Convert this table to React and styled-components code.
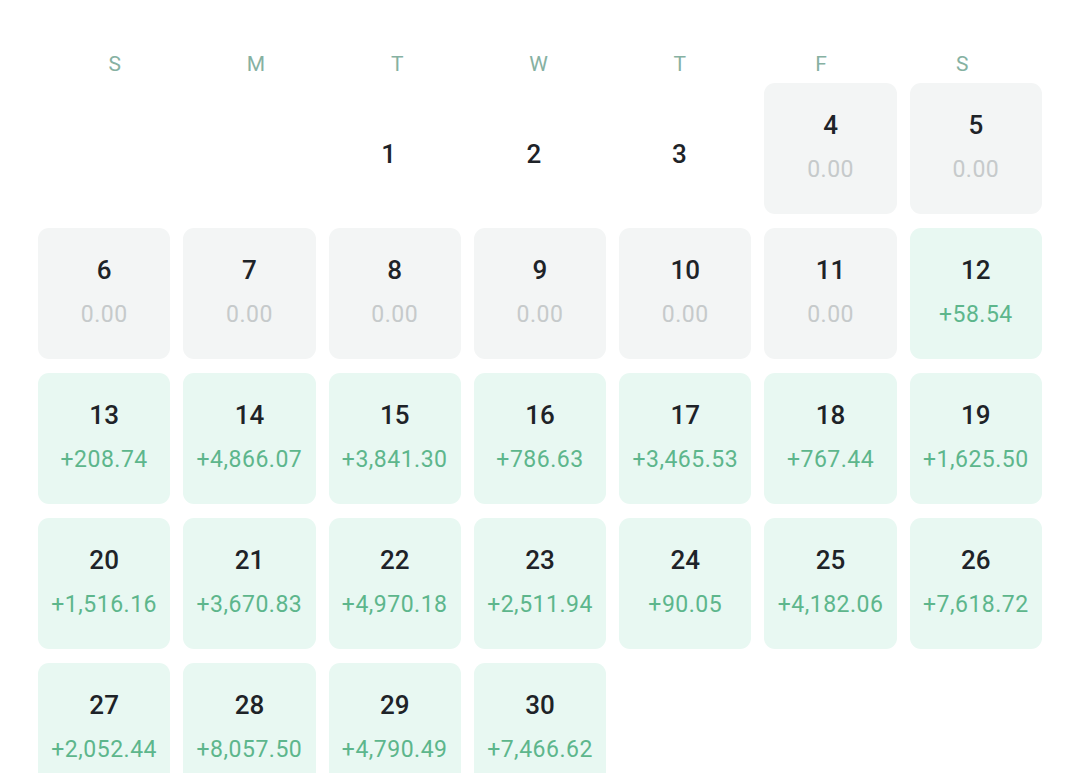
import styled, { createGlobalStyle } from "styled-components";

const GlobalStyle = createGlobalStyle`
	body {
		margin: 0;
		background: #ffffff;
		font-family: Roboto, "Liberation Sans", sans-serif;
	}
`;

const weekDays = ["S", "M", "T", "W", "T", "F", "S"];

// kind: "plain" = no data, "zero" = grey, "gain" = green
const days = [
	null, null,
	{ day: 1, kind: "plain" },
	{ day: 2, kind: "plain" },
	{ day: 3, kind: "plain" },
	{ day: 4, kind: "zero", amount: "0.00" },
	{ day: 5, kind: "zero", amount: "0.00" },
	{ day: 6, kind: "zero", amount: "0.00" },
	{ day: 7, kind: "zero", amount: "0.00" },
	{ day: 8, kind: "zero", amount: "0.00" },
	{ day: 9, kind: "zero", amount: "0.00" },
	{ day: 10, kind: "zero", amount: "0.00" },
	{ day: 11, kind: "zero", amount: "0.00" },
	{ day: 12, kind: "gain", amount: "+58.54" },
	{ day: 13, kind: "gain", amount: "+208.74" },
	{ day: 14, kind: "gain", amount: "+4,866.07" },
	{ day: 15, kind: "gain", amount: "+3,841.30" },
	{ day: 16, kind: "gain", amount: "+786.63" },
	{ day: 17, kind: "gain", amount: "+3,465.53" },
	{ day: 18, kind: "gain", amount: "+767.44" },
	{ day: 19, kind: "gain", amount: "+1,625.50" },
	{ day: 20, kind: "gain", amount: "+1,516.16" },
	{ day: 21, kind: "gain", amount: "+3,670.83" },
	{ day: 22, kind: "gain", amount: "+4,970.18" },
	{ day: 23, kind: "gain", amount: "+2,511.94" },
	{ day: 24, kind: "gain", amount: "+90.05" },
	{ day: 25, kind: "gain", amount: "+4,182.06" },
	{ day: 26, kind: "gain", amount: "+7,618.72" },
	{ day: 27, kind: "gain", amount: "+2,052.44" },
	{ day: 28, kind: "gain", amount: "+8,057.50" },
	{ day: 29, kind: "gain", amount: "+4,790.49" },
	{ day: 30, kind: "gain", amount: "+7,466.62" },
];

const App = () => {
	return (
		<>
			<GlobalStyle />
			<Calendar>
				<WeekRow>
					{weekDays.map((d, i) => (
						<WeekDay key={i}>{d}</WeekDay>
					))}
				</WeekRow>
				<DayGrid>
					{days.map((d, i) =>
						d ? (
							<DayCell key={i} $kind={d.kind}>
								<DayNumber>{d.day}</DayNumber>
								{d.amount && (
									<Amount $kind={d.kind}>{d.amount}</Amount>
								)}
							</DayCell>
						) : (
							<div key={i} />
						)
					)}
				</DayGrid>
			</Calendar>
		</>
	);
};

export default App;

const Calendar = styled.div`
	width: 1004px;
	padding: 52px 0 0 38px;
`;

const WeekRow = styled.div`
	display: grid;
	grid-template-columns: repeat(7, 1fr);
	width: 989px;
	margin: 0 0 7px 6px;
`;

const WeekDay = styled.div`
	text-align: center;
	font-size: 21px;
	line-height: 24px;
	color: #86b1a2;
`;

const DayGrid = styled.div`
	display: grid;
	grid-template-columns: repeat(7, 1fr);
	grid-auto-rows: 131px;
	column-gap: 13px;
	row-gap: 14px;
`;

const bg = {
	plain: "transparent",
	zero: "#f3f5f5",
	gain: "#e8f8f2",
};

const DayCell = styled.div`
	display: flex;
	flex-direction: column;
	align-items: center;
	border-radius: 11px;
	background: ${(p) => bg[p.$kind]};
	padding: ${(p) => (p.$kind === "plain" ? "56px 12px 0 0" : "27px 0 0")};
	box-sizing: border-box;
	gap: 16px;
`;

const DayNumber = styled.span`
	font-size: 26px;
	line-height: 30px;
	font-weight: 500;
	color: #1e2328;
`;

const Amount = styled.span`
	font-size: 23px;
	line-height: 27px;
	letter-spacing: 0.5px;
	color: ${(p) => (p.$kind === "gain" ? "#5db68c" : "#c6cacb")};
`;
